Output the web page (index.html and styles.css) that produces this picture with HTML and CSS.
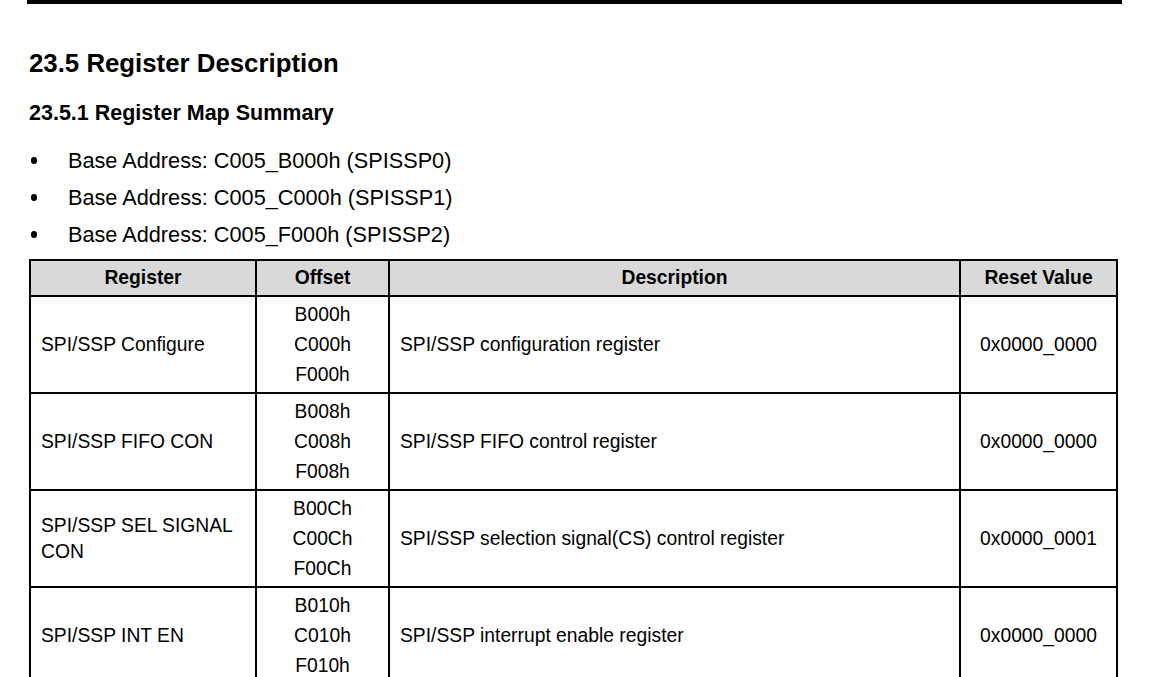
FILE: index.html
```html
<!DOCTYPE html>
<html>
<head>
<meta charset="utf-8">
<link rel="stylesheet" href="styles.css">
</head>
<body>
<div class="topbar"></div>
<div class="content">
  <h1 class="h1">23.5 Register Description</h1>
  <h2 class="h2">23.5.1 Register Map Summary</h2>
  <ul class="bullets">
    <li class="bullet">Base Address: C005_B000h (SPISSP0)</li>
    <li class="bullet">Base Address: C005_C000h (SPISSP1)</li>
    <li class="bullet">Base Address: C005_F000h (SPISSP2)</li>
  </ul>
  <table class="regmap">
    <colgroup>
      <col class="c-reg">
      <col class="c-off">
      <col class="c-desc">
      <col class="c-reset">
    </colgroup>
    <thead>
      <tr class="head-row">
        <th>Register</th>
        <th>Offset</th>
        <th>Description</th>
        <th>Reset Value</th>
      </tr>
    </thead>
    <tbody>
      <tr>
        <td class="reg">SPI/SSP Configure</td>
        <td class="off"><div>B000h</div><div>C000h</div><div>F000h</div></td>
        <td class="desc">SPI/SSP configuration register</td>
        <td class="reset">0x0000_0000</td>
      </tr>
      <tr>
        <td class="reg">SPI/SSP FIFO CON</td>
        <td class="off"><div>B008h</div><div>C008h</div><div>F008h</div></td>
        <td class="desc">SPI/SSP FIFO control register</td>
        <td class="reset">0x0000_0000</td>
      </tr>
      <tr>
        <td class="reg">SPI/SSP SEL SIGNAL CON</td>
        <td class="off"><div>B00Ch</div><div>C00Ch</div><div>F00Ch</div></td>
        <td class="desc">SPI/SSP selection signal(CS) control register</td>
        <td class="reset">0x0000_0001</td>
      </tr>
      <tr>
        <td class="reg">SPI/SSP INT EN</td>
        <td class="off"><div>B010h</div><div>C010h</div><div>F010h</div></td>
        <td class="desc">SPI/SSP interrupt enable register</td>
        <td class="reset">0x0000_0000</td>
      </tr>
    </tbody>
  </table>
</div>
</body>
</html>
```
FILE: styles.css
```css
html, body {
  margin: 0;
  padding: 0;
  background: #fff;
  color: #000;
  font-family: "Liberation Sans", Arial, sans-serif;
}
.topbar {
  margin-left: 27px;
  width: 1095px;
  height: 4px;
  background: #000;
}
.content {
  margin-left: 29px;
  width: 1089px;
}
.h1 {
  margin: 44px 0 0;
  font-size: 25.8px;
  line-height: 30px;
  font-weight: bold;
}
.h2 {
  margin: 22px 0 0;
  font-size: 21.5px;
  line-height: 26px;
  font-weight: bold;
}
.bullets {
  list-style: none;
  margin: 16px 0 0;
  padding: 0;
}
.bullet {
  display: flex;
  align-items: center;
  font-size: 21.7px;
  line-height: 37px;
}
.bullet::before {
  content: "";
  flex: none;
  width: 6.5px;
  height: 6.5px;
  border-radius: 50%;
  background: #000;
  margin-left: 1.5px;
  margin-right: 31px;
}
.regmap {
  margin-top: 6px;
  width: 1089px;
  border-collapse: collapse;
  table-layout: fixed;
  font-size: 19.3px;
}
.c-reg { width: 226px; }
.c-off { width: 133px; }
.c-desc { width: 571px; }
.c-reset { width: 157px; }
.regmap th,
.regmap td {
  border: 2px solid #000;
  vertical-align: middle;
}
.regmap th {
  background: #d9d9d9;
  font-weight: bold;
  text-align: center;
  line-height: 34px;
  padding: 0 4px;
}
.regmap td {
  padding: 3px 10px 2px;
  line-height: 26px;
}
.regmap td.off {
  text-align: center;
  line-height: 30px;
  padding: 3px 4px 2px;
}
.regmap td.desc {
  padding-left: 10px;
}
.regmap td.reset {
  text-align: center;
}
```
